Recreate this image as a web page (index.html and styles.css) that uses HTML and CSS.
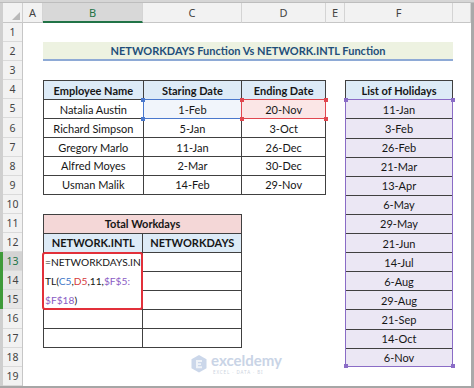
FILE: index.html
```html
<!DOCTYPE html>
<html>
<head>
<meta charset="utf-8">
<link rel="stylesheet" href="styles.css">
</head>
<body>
<div class="sheet">
  <div class="strip-top"></div>
  <div class="strip-left"></div>
  <div class="strip-left-sel"></div>
  <div class="strip-right"></div>
  <div class="strip-bottom"></div>

  <div class="corner"><span class="tri"></span></div>
  <div class="ch">A</div>
  <div class="ch sel">B</div>
  <div class="ch">C</div>
  <div class="ch">D</div>
  <div class="ch">E</div>
  <div class="ch">F</div>
  <div class="ch"></div>

  <div class="rows">
    <div class="rh">1</div><div class="rh">2</div><div class="rh">3</div><div class="rh">4</div>
    <div class="rh">5</div><div class="rh">6</div><div class="rh">7</div><div class="rh">8</div>
    <div class="rh">9</div><div class="rh">10</div><div class="rh">11</div><div class="rh">12</div>
    <div class="rh rsel">13</div><div class="rh rsel2">14</div><div class="rh rsel2">15</div>
    <div class="rh">16</div><div class="rh">17</div><div class="rh">18</div><div class="rh">19</div>
  </div>

  <div class="title">NETWORKDAYS Function Vs NETWORK.INTL Function</div>

  <div class="t1">
    <div class="c th">Employee Name</div><div class="c th">Staring Date</div><div class="c th">Ending Date</div>
    <div class="c">Natalia Austin</div><div class="c ref-c">1-Feb</div><div class="c ref-d">20-Nov</div>
    <div class="c">Richard Simpson</div><div class="c">5-Jan</div><div class="c">3-Oct</div>
    <div class="c">Gregory Marlo</div><div class="c">11-Jan</div><div class="c">26-Dec</div>
    <div class="c">Alfred Moyes</div><div class="c">2-Mar</div><div class="c">30-Dec</div>
    <div class="c">Usman Malik</div><div class="c">14-Feb</div><div class="c">29-Nov</div>
  </div>

  <div class="hol">
    <div class="hol-h">List of Holidays</div>
    <div class="hol-range">
      <div>11-Jan</div><div>3-Feb</div><div>26-Feb</div><div>21-Mar</div><div>13-Apr</div>
      <div>6-May</div><div>29-May</div><div>21-Jun</div><div>14-Jul</div><div>6-Aug</div>
      <div>29-Aug</div><div>21-Sep</div><div>14-Oct</div><div>6-Nov</div>
    </div>
  </div>

  <div class="t2">
    <div class="c tw">Total Workdays</div>
    <div class="c th">NETWORK.INTL</div><div class="c th">NETWORKDAYS</div>
    <div class="c formula">=NETWORKDAYS.IN<br>TL(<span class="fc">C5</span>,<span class="fd">D5</span>,11,<span class="ff">$F$5:</span><br><span class="ff">$F$18</span>)</div>
    <div class="c"></div>
    <div class="c"></div>
    <div class="c"></div>
    <div class="c"></div><div class="c"></div>
    <div class="c"></div><div class="c"></div>
  </div>

  <div class="watermark">
    <svg class="logo" width="18" height="20" viewBox="0 0 18 20">
      <path d="M9 1 L16.5 5.2 L16.5 14.2 L9 18.6 L1.5 14.2 L1.5 5.2 Z" fill="#c6d3e8"/>
      <path d="M6 6 L12 6 L12 8 L8 8 L8 9.2 L11 9.2 L11 11 L8 11 L8 12.3 L12 12.3 L12 14.2 L6 14.2 Z" fill="#eef2f8"/>
    </svg>
    <div class="wm-text">
      <div class="wm-name">exceldemy</div>
      <div class="wm-sub">EXCEL · DATA · BI</div>
    </div>
  </div>
</div>
</body>
</html>
```
FILE: styles.css
```css
html, body {
  margin: 0;
  padding: 0;
}
body {
  width: 474px;
  height: 388px;
  overflow: hidden;
  background: #ffffff;
  font-family: Lato, "Open Sans", sans-serif;
  color: #161616;
}
.sheet {
  position: relative;
  display: grid;
  grid-template-columns: 3px 20px 20px 100px 99px 84px 19px 108px 18px 3px;
  grid-template-rows: 3px 20px repeat(19, 19.1px) 1fr;
  width: 474px;
  height: 388px;
}
.strip-top {
  grid-row: 1;
  grid-column: 1 / -1;
  background: #d6d6d6;
  border-bottom: 1px solid #bdbdbd;
}
.strip-left {
  grid-row: 2 / 22;
  grid-column: 1;
  background: #cfcfcf;
}
.strip-left-sel {
  grid-row: 15 / 18;
  grid-column: 1;
  background: #3f9a3a;
}
.strip-right {
  grid-row: 2 / -1;
  grid-column: 10;
  background: #a9a9a9;
}
.strip-bottom {
  grid-row: 22;
  grid-column: 1 / -1;
  background: #a6a6a6;
}
.corner {
  grid-row: 2;
  grid-column: 2;
  background: #f2f2f2;
  border-right: 1px solid #cfcfcf;
  border-bottom: 1px solid #c6c6c6;
  display: flex;
  align-items: flex-end;
  justify-content: flex-end;
  padding: 0 2px 2px 0;
}
.tri {
  width: 0;
  height: 0;
  border-left: 8px solid transparent;
  border-bottom: 8px solid #b9b9b9;
}
.ch {
  grid-row: 2;
  background: #f2f2f2;
  border-right: 1px solid #d4d4d4;
  border-bottom: 1px solid #c6c6c6;
  display: flex;
  align-items: center;
  justify-content: center;
  font-family: "Noto Sans", sans-serif;
  font-size: 11px;
  color: #444;
}
.ch.sel {
  background: #d8d8d8;
  color: #217346;
  border-bottom: 2px solid #217346;
}
.rows {
  grid-row: 3 / 22;
  grid-column: 2;
  display: flex;
  flex-direction: column;
  background: #f2f2f2;
  border-right: 1px solid #c6c6c6;
}
.rh {
  flex: 1;
  display: flex;
  align-items: center;
  justify-content: center;
  border-bottom: 1px solid #dadada;
  font-family: "Noto Sans", sans-serif;
  font-size: 10.5px;
  color: #444;
}
.rh.rsel {
  background: #d3d3d3;
  color: #217346;
}
.rh.rsel2 {
  background: #e6e6e6;
}
.title {
  grid-row: 4;
  grid-column: 4 / 9;
  background: #edf2e1;
  border-bottom: 2px solid #8eaad6;
  display: flex;
  align-items: center;
  justify-content: center;
  font-weight: 700;
  font-size: 11px;
  color: #1f4e79;
}
.t1 {
  grid-row: 6 / 12;
  grid-column: 4 / 7;
  display: grid;
  grid-template-columns: 100fr 99fr 84fr;
  grid-template-rows: repeat(6, 1fr);
  border-top: 1px solid #404040;
  border-left: 1px solid #404040;
}
.t2 {
  grid-row: 13 / 20;
  grid-column: 4 / 6;
  display: grid;
  grid-template-columns: 100fr 99fr;
  grid-template-rows: repeat(7, 1fr);
  border-top: 1px solid #404040;
  border-left: 1px solid #404040;
}
.c {
  border-right: 1px solid #404040;
  border-bottom: 1px solid #404040;
  display: flex;
  align-items: center;
  justify-content: center;
  font-size: 11px;
  background: #fff;
}
.th {
  background: #ddebf7;
  font-weight: 700;
}
.tw {
  grid-column: 1 / 3;
  background: #f4d7d7;
  font-weight: 700;
}
.ref-c, .ref-d {
  position: relative;
}
.ref-c {
  background: #f1f5fb;
}
.ref-d {
  background: #fbe6e6;
}
.ref-c::after, .ref-d::after {
  content: "";
  position: absolute;
  top: -1px;
  left: -1px;
  right: -1px;
  bottom: -1px;
  border: 1.5px solid #4a78cc;
}
.ref-d::after {
  border-color: #e0474f;
}
.ref-c::before, .ref-d::before {
  content: "";
  position: absolute;
  top: -2.5px;
  left: -2.5px;
  right: -2.5px;
  bottom: -2.5px;
  z-index: 1;
  --k: #4a78cc;
  background:
    linear-gradient(var(--k), var(--k)) 0 0 / 4px 4px no-repeat,
    linear-gradient(var(--k), var(--k)) 100% 0 / 4px 4px no-repeat,
    linear-gradient(var(--k), var(--k)) 0 100% / 4px 4px no-repeat,
    linear-gradient(var(--k), var(--k)) 100% 100% / 4px 4px no-repeat;
}
.ref-d::before {
  --k: #e0474f;
}
.formula {
  grid-row: 3 / 6;
  grid-column: 1;
  position: relative;
  display: block;
  padding-left: 1px;
  line-height: 19.1px;
  font-size: 10.2px;
  text-align: left;
  white-space: nowrap;
}
.formula::after {
  content: "";
  position: absolute;
  top: -1px;
  left: -2px;
  right: -1px;
  bottom: -1px;
  border: 2.5px solid #e2303a;
  border-radius: 3px;
}
.fc { color: #3f78c8; }
.fd { color: #d63a3a; }
.ff { color: #8a5cc4; }
.hol {
  grid-row: 6 / 21;
  grid-column: 8;
  display: grid;
  grid-template-rows: 1fr 14fr;
}
.hol-h {
  background: #ddebf7;
  border: 1px solid #404040;
  border-bottom: none;
  display: flex;
  align-items: center;
  justify-content: center;
  font-weight: 700;
  font-size: 11px;
}
.hol-range {
  position: relative;
  display: grid;
  grid-template-rows: repeat(14, 1fr);
  background: #ebe7f4;
}
.hol-range > div {
  display: flex;
  align-items: center;
  justify-content: center;
  font-size: 11px;
  border-top: 1px solid #404040;
  border-left: 1px solid #404040;
  border-right: 1px solid #404040;
}
.hol-range::after {
  content: "";
  position: absolute;
  top: 0;
  left: 0;
  right: 0;
  bottom: 0;
  border: 1.6px solid #8a6cc6;
}
.hol-range::before {
  content: "";
  position: absolute;
  top: -1.5px;
  left: -1.5px;
  right: -1.5px;
  bottom: -1.5px;
  z-index: 1;
  --k: #8a6cc6;
  background:
    linear-gradient(var(--k), var(--k)) 0 0 / 4px 4px no-repeat,
    linear-gradient(var(--k), var(--k)) 100% 0 / 4px 4px no-repeat,
    linear-gradient(var(--k), var(--k)) 0 100% / 4px 4px no-repeat,
    linear-gradient(var(--k), var(--k)) 100% 100% / 4px 4px no-repeat;
}
.watermark {
  position: absolute;
  left: 190px;
  top: 352px;
  display: flex;
  align-items: center;
  gap: 3px;
  opacity: 0.9;
}
.wm-text {
  display: flex;
  flex-direction: column;
}
.wm-name {
  font-family: Lato, sans-serif;
  font-weight: 700;
  font-size: 15px;
  line-height: 17px;
  color: #c4d0e4;
}
.wm-sub {
  font-family: "Noto Sans", sans-serif;
  font-size: 4.5px;
  letter-spacing: 0.9px;
  line-height: 6px;
  color: #c8cfdb;
  padding-left: 2px;
}
```
